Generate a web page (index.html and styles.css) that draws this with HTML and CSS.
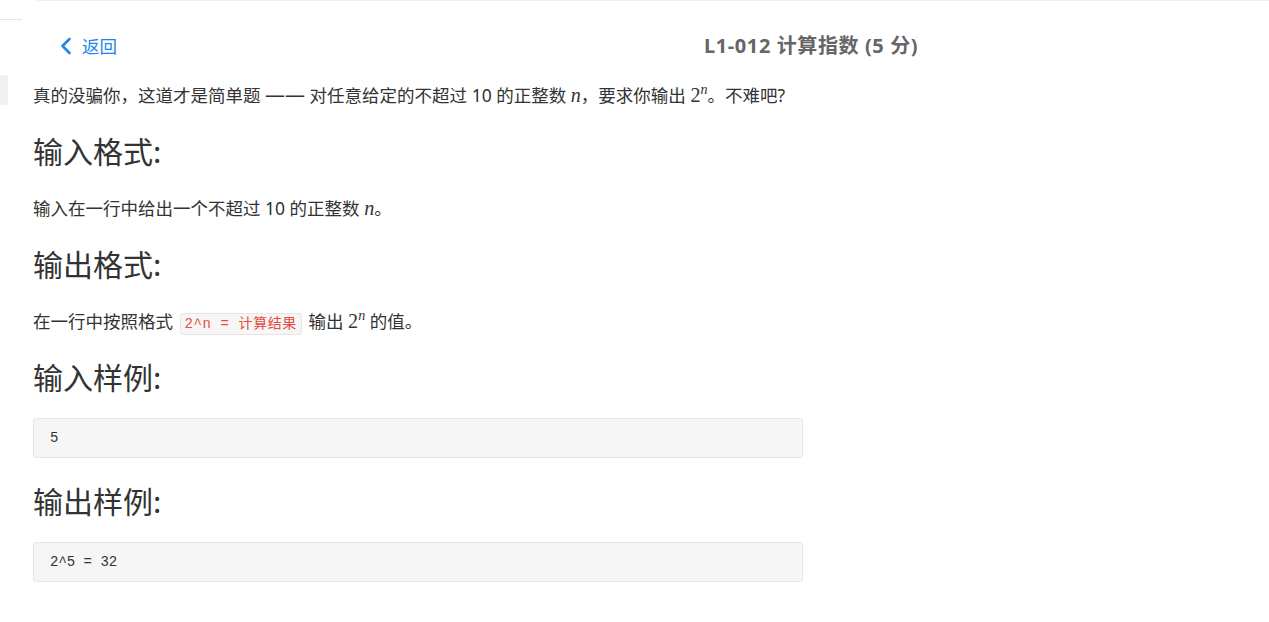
FILE: index.html
```html
<!DOCTYPE html>
<html lang="zh-CN">
<head>
<meta charset="utf-8">
<title>L1-012 计算指数</title>
<link rel="stylesheet" href="styles.css">
</head>
<body>
<div class="page">
  <aside class="edge">
    <div class="edge-line"></div>
    <div class="edge-tab"></div>
  </aside>
  <main class="main">
    <div class="topline"></div>
    <header class="head">
      <a class="back" href="#">
        <svg class="chev" width="13" height="18" viewBox="0 0 13 18"><path d="M10.5 2 L3.5 9 L10.5 16" fill="none" stroke="currentColor" stroke-width="2.6" stroke-linecap="round" stroke-linejoin="round"/></svg>
        <span>返回</span>
      </a>
      <h1 class="title">L1-012 计算指数 (5 分)</h1>
    </header>
    <article class="content">
      <p class="text">真的没骗你，这道才是简单题 <span class="dash">——</span> 对任意给定的不超过 10 的正整数 <span class="math"><i>n</i></span>，要求你输出 <span class="math">2<sup><i>n</i></sup></span>。不难吧?</p>
      <h2 class="sec">输入格式:</h2>
      <p class="text">输入在一行中给出一个不超过 10 的正整数 <span class="math"><i>n</i></span>。</p>
      <h2 class="sec">输出格式:</h2>
      <p class="text">在一行中按照格式 <code class="code">2^n = 计算结果</code> 输出 <span class="math">2<sup><i>n</i></sup></span> 的值。</p>
      <h2 class="sec">输入样例:</h2>
      <pre class="sample">5</pre>
      <h2 class="sec">输出样例:</h2>
      <pre class="sample">2^5 = 32</pre>
    </article>
  </main>
</div>
</body>
</html>
```

FILE: styles.css
```css
html, body {
  margin: 0;
  padding: 0;
  background: #ffffff;
}

body {
  font-family: "Noto Sans", "Noto Sans CJK SC", sans-serif;
  color: #333333;
}

.page {
  display: flex;
  min-height: 622px;
}

.edge {
  width: 22px;
  flex: none;
}

.edge-line {
  margin-top: 19px;
  height: 1px;
  width: 22px;
  background: #e6e6e6;
}

.edge-tab {
  margin-top: 55px;
  width: 8px;
  height: 30px;
  background: #f0f0f0;
  border-radius: 0 3px 3px 0;
}

.main {
  flex: 1;
  padding-left: 11px;
}

.topline {
  margin-left: 4px;
  height: 1px;
  background: #efefef;
}

.head {
  margin-top: 27px;
  height: 36px;
  display: flex;
  align-items: center;
}

.back {
  margin-left: 26px;
  display: flex;
  align-items: center;
  color: #1f87e8;
  text-decoration: none;
  font-family: "Noto Sans CJK SC", sans-serif;
  font-size: 17.5px;
  line-height: 24px;
}

.chev {
  margin-right: 10px;
}

.title {
  margin: 0 0 0 587px;
  font-family: "Noto Sans", "Noto Sans CJK SC", sans-serif;
  font-size: 20px;
  font-weight: 700;
  line-height: 28px;
  letter-spacing: 0.6px;
  color: #666666;
}

.content {
  margin-top: 18px;
}

.text {
  margin: 0;
  font-size: 17.5px;
  line-height: 26px;
  color: #333333;
}

.dash {
  font-family: "Noto Sans", sans-serif;
  font-size: 20px;
  line-height: 1;
}

.math {
  font-family: "Liberation Serif", "DejaVu Serif", serif;
  font-size: 1.15em;
  line-height: 1;
}

.math sup {
  font-size: 0.7em;
  vertical-align: 0.55em;
  line-height: 0;
}

.sec {
  margin: 22px 0 25px;
  font-family: "Noto Sans CJK SC", sans-serif;
  font-size: 30px;
  font-weight: 400;
  line-height: 40px;
  color: #333333;
}

.code {
  font-family: "Liberation Mono", "Noto Sans CJK SC", monospace;
  font-size: 14px;
  line-height: 1;
  color: #e84b3f;
  background: #f6f6f6;
  border: 1px solid #e6e6e6;
  border-radius: 3px;
  padding: 2px 4px;
  margin: 0 2px;
  letter-spacing: 0.6px;
}

.sample {
  margin: -3px 0 0;
  width: 736px;
  padding: 12px 16px;
  font-family: "Liberation Mono", monospace;
  font-size: 14px;
  line-height: 14px;
  color: #333333;
  background: #f6f6f6;
  border: 1px solid #e6e6e6;
  border-radius: 3px;
}
```
